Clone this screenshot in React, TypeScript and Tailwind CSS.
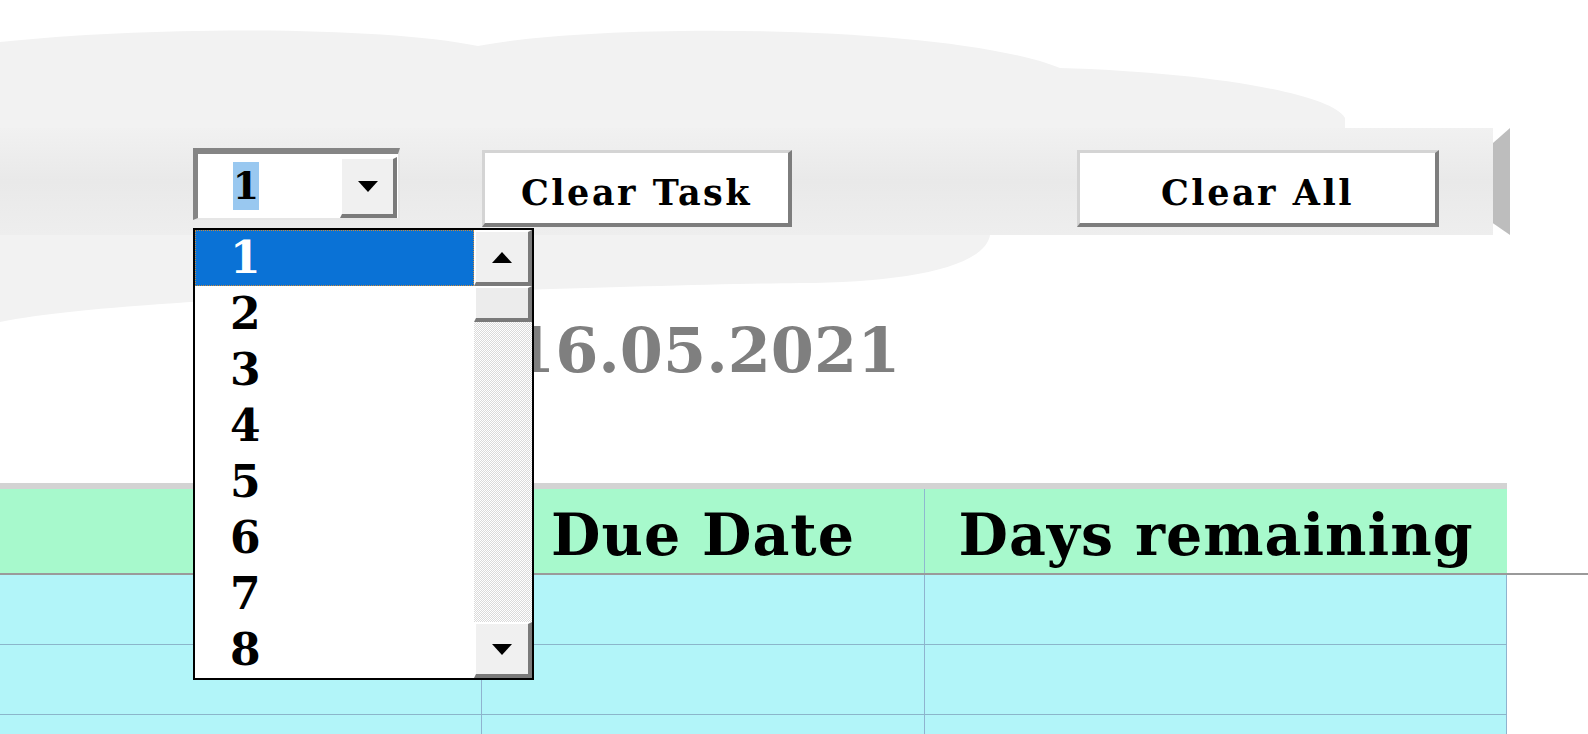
import React from 'react';

const rows = [1, 2, 3];
const options = [1, 2, 3, 4, 5, 6, 7, 8];

const Arrow = ({ up = false }: { up?: boolean }) => (
  <svg width="20" height="11" viewBox="0 0 20 11" className="block">
    {up ? <polygon points="10,0 20,11 0,11" fill="#000" /> : <polygon points="0,0 20,0 10,11" fill="#000" />}
  </svg>
);

const Cloud = () => (
  <svg className="pointer-events-none absolute left-0 top-0" width="1588" height="340" viewBox="0 0 1588 340">
    <path
      d="M0 42 C150 26 380 26 478 46 C600 22 950 24 1060 68 C1200 72 1330 92 1345 118 L1345 235 L990 235 C985 268 900 283 800 283 C650 285 400 294 190 302 C100 308 40 314 0 322 Z"
      fill="#f2f2f2"
    />
  </svg>
);

const ToolButton = ({ label, className }: { label: string; className: string }) => (
  <button
    className={`flex h-[77px] items-center justify-center border-l-[3px] border-t-[3px] border-b-[4px] border-r-[4px] border-l-[#d4d4d4] border-t-[#d4d4d4] border-b-[#7d7d7d] border-r-[#7d7d7d] bg-white pt-[8px] text-[35px] font-bold leading-none tracking-[2.5px] text-black ${className}`}
  >
    {label}
  </button>
);

const Combo = () => (
  <div className="ml-[193px] mt-[20px] flex h-[72px] w-[207px] border-l-[5px] border-t-[6px] border-b-[2px] border-r-[2px] border-l-[#858585] border-t-[#858585] border-b-[#e6e6e6] border-r-[#e6e6e6] bg-white">
    <div className="flex-1 pl-[35px] pt-[8px]">
      <div className="flex h-[48px] w-[26px] items-center justify-center bg-[#99c8f0] text-[38px] font-bold leading-none text-black">1</div>
    </div>
    <div className="mr-[1px] mt-[3px] flex h-[61px] w-[57px] items-center justify-center border-l-[2px] border-t-[2px] border-b-[4px] border-r-[4px] border-l-white border-t-white border-b-[#7a7a7a] border-r-[#7a7a7a] bg-[#f0f0f0]">
      <Arrow />
    </div>
  </div>
);

const Toolbar = () => (
  <div className="flex h-[107px] w-[1510px]">
    <div className="flex flex-1 items-start bg-linear-to-b from-[#f1f1f1] via-[#e9e9e9] to-[#eeeeee]">
      <Combo />
      <ToolButton label="Clear Task" className="ml-[82px] mt-[22px] w-[310px]" />
      <ToolButton label="Clear All" className="ml-[285px] mt-[22px] w-[362px]" />
    </div>
    <div className="w-[17px] bg-[#bdbdbd] [clip-path:polygon(0_15px,100%_0,100%_100%,0_89%)]" />
  </div>
);

const TaskTable = () => (
  <div>
    <div className="h-[6px] w-[1507px] bg-[#d3d3d3]" />
    <div className="grid h-[84px] w-[1507px] grid-cols-[482px_443px_582px] bg-[#a7f9cc] text-[57px] font-bold leading-none tracking-[1px] text-black">
      <div className="border-r border-[#8fb8cf]" />
      <div className="flex items-center justify-center border-r border-[#8fb8cf] pt-[6px]">Due Date</div>
      <div className="flex items-center justify-center pt-[6px]">Days remaining</div>
    </div>
    <div className="h-[2px] w-full bg-[#9a9a9a]" />
    {rows.map((r) => (
      <div key={r} className="grid h-[70px] w-[1507px] grid-cols-[482px_443px_582px] border-b border-[#8bb5ca] bg-[#b2f5f9]">
        <div className="border-r border-[#8fb3cf]" />
        <div className="border-r border-[#8fb3cf]" />
        <div className="border-r border-[#8fb3cf]" />
      </div>
    ))}
  </div>
);

const DropdownList = () => (
  <div className="absolute left-[193px] top-[228px] flex h-[452px] w-[341px] border-2 border-black bg-white">
    <div className="flex w-[279px] flex-col">
      {options.map((n) => (
        <div
          key={n}
          className={
            n === 1
              ? 'flex h-[56px] items-center border border-dotted border-[#c98a3c] bg-[#0a72d6] pl-[34px] text-[44px] font-bold leading-none text-white'
              : 'flex h-[56px] items-center pl-[35px] text-[44px] font-bold leading-none text-black'
          }
        >
          {n}
        </div>
      ))}
    </div>
    <div className="flex w-[58px] flex-col">
      <div className="flex h-[56px] items-center justify-center border-l-[2px] border-t-[2px] border-b-[4px] border-r-[4px] border-l-white border-t-white border-b-[#7a7a7a] border-r-[#7a7a7a] bg-[#f0f0f0]">
        <Arrow up />
      </div>
      <div className="h-[36px] border-l-[2px] border-t-[2px] border-b-[4px] border-r-[4px] border-l-white border-t-white border-b-[#7a7a7a] border-r-[#7a7a7a] bg-[#ececec]" />
      <div className="flex-1 bg-[repeating-conic-gradient(#dadada_0_25%,#ffffff_0_50%)] bg-[length:2px_2px]" />
      <div className="flex h-[56px] items-center justify-center border-l-[2px] border-t-[2px] border-b-[4px] border-r-[4px] border-l-white border-t-white border-b-[#7a7a7a] border-r-[#7a7a7a] bg-[#f0f0f0]">
        <Arrow />
      </div>
    </div>
  </div>
);

const App = () => {
  return (
    <div className="relative h-[734px] w-[1588px] overflow-hidden bg-white font-['DejaVu_Serif',serif]">
      <Cloud />
      <div className="relative pt-[128px]">
        <Toolbar />
        <div className="h-[248px] pl-[512px] pt-[85px]">
          <span className="text-[62px] font-bold leading-[62px] text-[#7f7f7f]">16.05.2021</span>
        </div>
        <TaskTable />
      </div>
      <DropdownList />
    </div>
  );
};

export default App;
